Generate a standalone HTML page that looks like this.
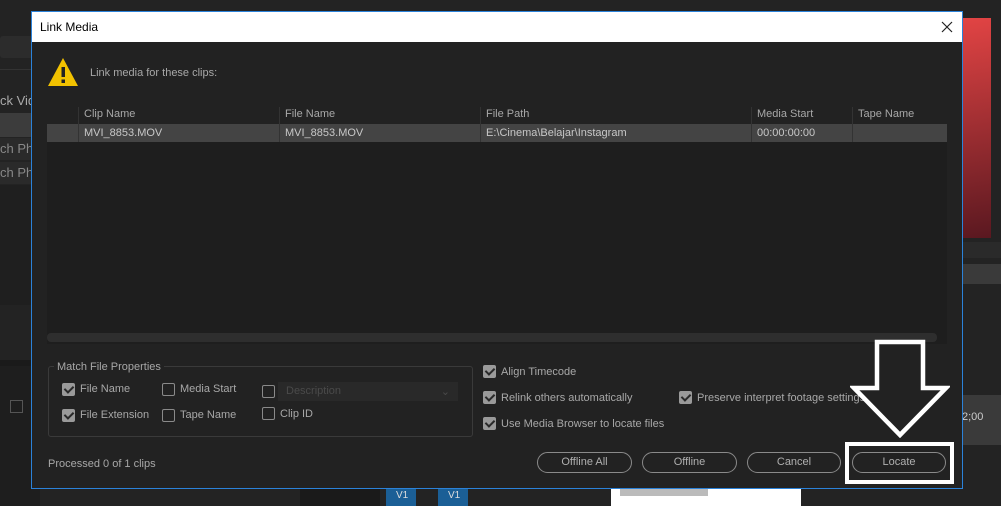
<!DOCTYPE html>
<html><head><meta charset="utf-8"><style>
*{box-sizing:border-box;margin:0;padding:0}
body{width:1001px;height:506px;overflow:hidden;background:#232323;font-family:"Liberation Sans",sans-serif;position:relative;font-size:11px;color:#a8a8a8}
.a{position:absolute}
.t{white-space:nowrap;overflow:hidden}
.cb{position:absolute;width:13px;height:13px;border:1.5px solid #8a8a8a;border-radius:2px}
.cb.on{background:#9a9a9a;border-color:#9a9a9a}
.cb.on::after{content:"";position:absolute;left:3px;top:0px;width:4px;height:7px;border:solid #2a2a2a;border-width:0 2px 2px 0;transform:rotate(45deg)}
.lbl{position:absolute;font-size:11px;color:#a8a8a8;white-space:nowrap}
.btn{position:absolute;top:452px;height:21px;border:1px solid #8a8a8a;border-radius:11px;text-align:center;line-height:19px;color:#b0b0b0;font-size:11px}
</style></head><body>
<!-- background -->
<div class="a" style="left:0;top:36px;width:40px;height:22px;background:#2c2c2c;border-radius:3px"></div>
<div class="a" style="left:0;top:69px;width:40px;height:1px;background:#333"></div>
<div class="a t" style="left:0;top:90px;width:40px;height:22px;background:#232323;color:#aaa;font-size:13px;line-height:22px">ck Vid</div>
<div class="a" style="left:0;top:113px;width:40px;height:24px;background:#3c3c3c"></div>
<div class="a t" style="left:0;top:138px;width:40px;height:22px;background:#2a2a2a;color:#888;font-size:13px;line-height:22px">ch Pho</div>
<div class="a t" style="left:0;top:162px;width:40px;height:22px;background:#2a2a2a;color:#888;font-size:13px;line-height:22px">ch Pho</div>
<div class="a" style="left:0;top:185px;width:40px;height:120px;background:#1f1f1f"></div>
<div class="a" style="left:0;top:360px;width:40px;height:6px;background:#1a1a1a"></div>
<div class="a" style="left:0;top:366px;width:40px;height:140px;background:#1e1e1e"></div>
<div class="a" style="left:10px;top:400px;width:13px;height:13px;border:1.5px solid #555"></div>
<div class="a" style="left:963px;top:18px;width:28px;height:220px;background:linear-gradient(170deg,#e24444,#5a1820)"></div>
<div class="a" style="left:962px;top:242px;width:39px;height:16px;background:#2a2a2a"></div>
<div class="a" style="left:962px;top:264px;width:39px;height:20px;background:#3a3a3a"></div>
<div class="a" style="left:962px;top:395px;width:39px;height:50px;background:#3a3a3a;color:#ccc;font-size:11px;padding-top:16px">2;00</div>
<div class="a" style="left:300px;top:488px;width:80px;height:18px;background:#1a1a1a"></div>
<div class="a" style="left:386px;top:488px;width:30px;height:18px;background:#1b5f96;color:#ddd;font-size:10px;padding:2px 10px">V1</div>
<div class="a" style="left:438px;top:488px;width:30px;height:18px;background:#1b5f96;color:#ddd;font-size:10px;padding:2px 10px">V1</div>
<div class="a" style="left:611px;top:488px;width:190px;height:18px;background:#fff"></div>
<div class="a" style="left:620px;top:488px;width:88px;height:8px;background:#bbb"></div>
<!-- dialog -->
<div class="a" style="left:31px;top:11px;width:932px;height:478px;border:1px solid #2b82d9;background:#222"></div>
<div class="a" style="left:32px;top:12px;width:930px;height:30px;background:#fff;color:#000;font-size:12px;line-height:30px;padding-left:8px">Link Media</div>
<svg class="a" style="left:941px;top:21px" width="12" height="12"><path d="M1 1L11 11M11 1L1 11" stroke="#222" stroke-width="1.2"/></svg>
<svg class="a" style="left:47px;top:56px" width="32" height="32"><polygon points="16,2 31,30 1,30" fill="#f2c200"/><rect x="14.5" y="11" width="3.5" height="10" fill="#222"/><rect x="14.5" y="23.5" width="3.5" height="3.5" fill="#222"/></svg>
<div class="lbl" style="left:90px;top:67px">Link media for these clips:</div>
<!-- table -->
<div class="a" style="left:47px;top:104px;width:900px;height:240px;background:#1e1e1e"></div>
<div class="a" style="left:47px;top:104px;width:900px;height:20px;background:#222"></div>
<div class="lbl" style="left:84px;top:108px">Clip Name</div>
<div class="lbl" style="left:285px;top:108px">File Name</div>
<div class="lbl" style="left:486px;top:108px">File Path</div>
<div class="lbl" style="left:757px;top:108px">Media Start</div>
<div class="lbl" style="left:858px;top:108px">Tape Name</div>
<div class="a" style="left:47px;top:124px;width:900px;height:18px;background:#444"></div>
<div class="a" style="left:78px;top:107px;width:1px;height:35px;background:#333"></div>
<div class="a" style="left:279px;top:107px;width:1px;height:35px;background:#333"></div>
<div class="a" style="left:480px;top:107px;width:1px;height:35px;background:#333"></div>
<div class="a" style="left:751px;top:107px;width:1px;height:35px;background:#333"></div>
<div class="a" style="left:852px;top:107px;width:1px;height:35px;background:#333"></div>
<div class="lbl" style="left:84px;top:127px;color:#c8c8c8">MVI_8853.MOV</div>
<div class="lbl" style="left:285px;top:127px;color:#c8c8c8">MVI_8853.MOV</div>
<div class="lbl" style="left:486px;top:127px;color:#c8c8c8">E:\Cinema\Belajar\Instagram</div>
<div class="lbl" style="left:757px;top:127px;color:#c8c8c8">00:00:00:00</div>
<div class="a" style="left:47px;top:333px;width:890px;height:9px;background:#2e2e2e;border-radius:4px"></div>
<!-- match file props -->
<div class="a" style="left:48px;top:366px;width:425px;height:71px;border:1px solid #3a3a3a;border-radius:3px"></div>
<div class="lbl" style="left:54px;top:361px;background:#222;padding:0 3px">Match File Properties</div>
<div class="cb on" style="left:62px;top:383px"></div><div class="lbl" style="left:80px;top:383px">File Name</div>
<div class="cb on" style="left:62px;top:409px"></div><div class="lbl" style="left:80px;top:409px">File Extension</div>
<div class="cb" style="left:162px;top:383px"></div><div class="lbl" style="left:180px;top:383px">Media Start</div>
<div class="cb" style="left:162px;top:409px"></div><div class="lbl" style="left:180px;top:409px">Tape Name</div>
<div class="cb" style="left:262px;top:385px"></div>
<div class="a" style="left:278px;top:382px;width:180px;height:19px;background:#292929;color:#4a4a4a;font-size:11px;padding:3px 8px">Description<span style="float:right">⌄</span></div>
<div class="cb" style="left:262px;top:407px"></div><div class="lbl" style="left:280px;top:408px">Clip ID</div>
<div class="cb on" style="left:483px;top:365px"></div><div class="lbl" style="left:501px;top:366px">Align Timecode</div>
<div class="cb on" style="left:483px;top:391px"></div><div class="lbl" style="left:501px;top:392px">Relink others automatically</div>
<div class="cb on" style="left:679px;top:391px"></div><div class="lbl" style="left:697px;top:392px">Preserve interpret footage settings</div>
<div class="cb on" style="left:483px;top:417px"></div><div class="lbl" style="left:501px;top:418px">Use Media Browser to locate files</div>
<div class="lbl" style="left:48px;top:458px">Processed 0 of 1 clips</div>
<div class="btn" style="left:537px;width:95px">Offline All</div>
<div class="btn" style="left:642px;width:95px">Offline</div>
<div class="btn" style="left:747px;width:94px">Cancel</div>
<div class="btn" style="left:852px;width:94px">Locate</div>
<!-- annotation -->
<div class="a" style="left:845px;top:442px;width:109px;height:42px;border:4px solid #fff"></div>
<svg class="a" style="left:850px;top:338px" width="100" height="100"><polygon points="27,4 73,4 73,50 96,50 50,97 4,50 27,50" fill="#222" stroke="#fff" stroke-width="4.5" stroke-linejoin="miter"/></svg>
</body></html>
